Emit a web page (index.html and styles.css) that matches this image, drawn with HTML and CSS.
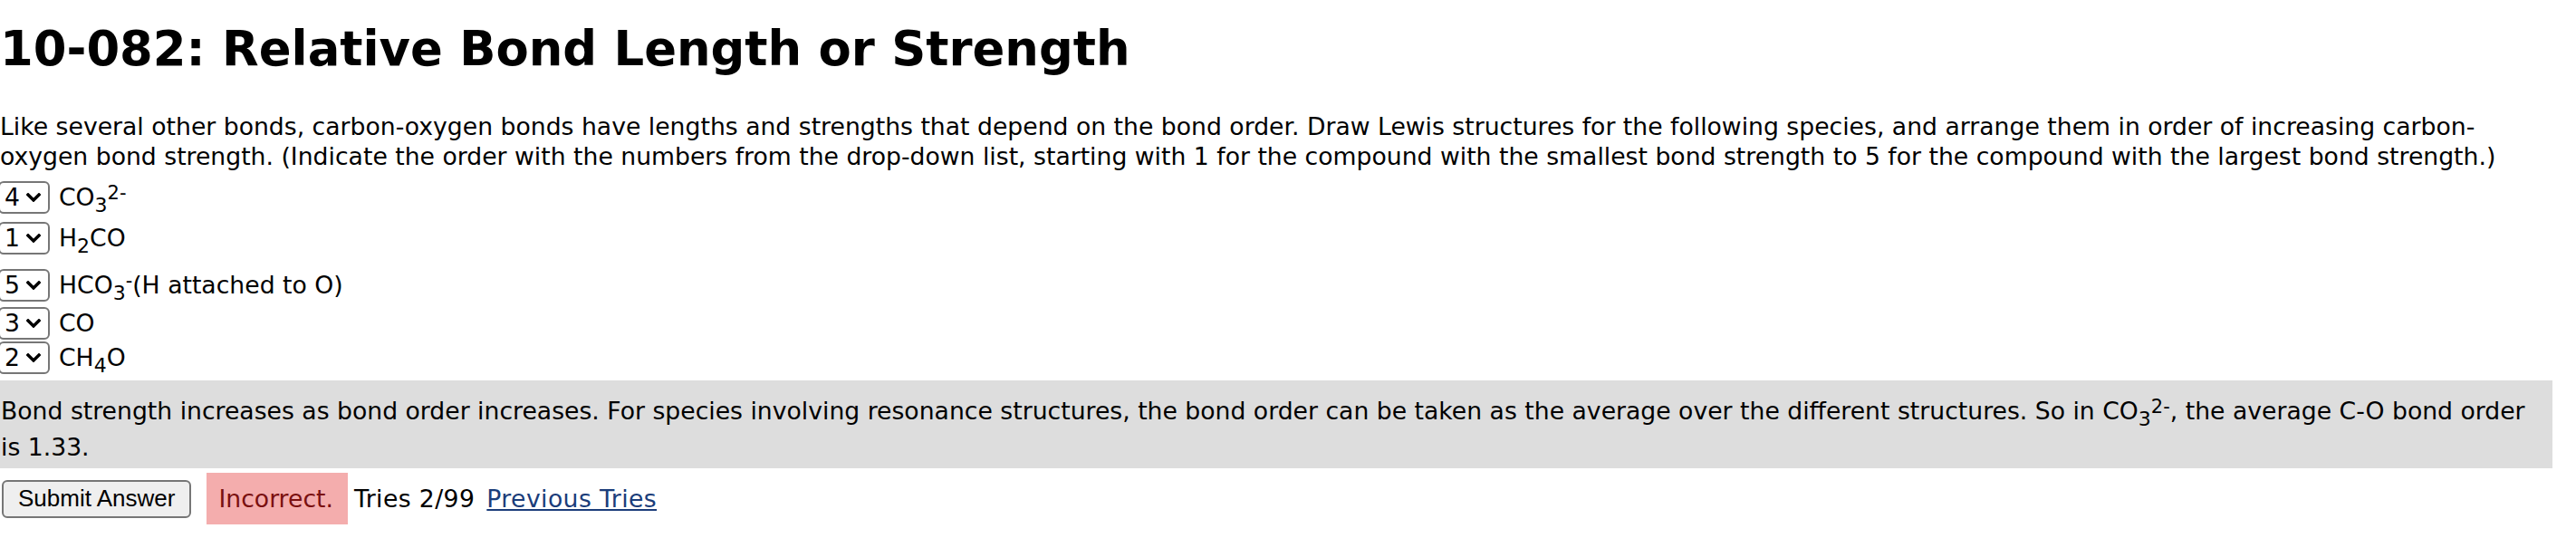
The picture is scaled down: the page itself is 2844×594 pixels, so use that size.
FILE: index.html
```html
<!DOCTYPE html>
<html lang="en">
<head>
<meta charset="utf-8">
<title>10-082: Relative Bond Length or Strength</title>
<link rel="stylesheet" href="styles.css">
</head>
<body>
<div class="page">
  <h1 class="title">10-082: Relative Bond Length or Strength</h1>
  <p class="intro">Like several other bonds, carbon-oxygen bonds have lengths and strengths that depend on the bond order. Draw Lewis structures for the following species, and arrange them in order of increasing carbon-oxygen bond strength. (Indicate the order with the numbers from the drop-down list, starting with 1 for the compound with the smallest bond strength to 5 for the compound with the largest bond strength.)</p>
  <div class="options">
    <div class="opt sup first">
      <span class="dd"><span class="dd-val">4</span><svg class="chev" viewBox="0 0 16 10" width="16" height="10"><polyline points="2,2 8,8 14,2" /></svg></span>
      <span class="label">CO<sub>3</sub><sup>2-</sup></span>
    </div>
    <div class="opt sub">
      <span class="dd"><span class="dd-val">1</span><svg class="chev" viewBox="0 0 16 10" width="16" height="10"><polyline points="2,2 8,8 14,2" /></svg></span>
      <span class="label">H<sub>2</sub>CO</span>
    </div>
    <div class="opt sup sub">
      <span class="dd"><span class="dd-val">5</span><svg class="chev" viewBox="0 0 16 10" width="16" height="10"><polyline points="2,2 8,8 14,2" /></svg></span>
      <span class="label">HCO<sub>3</sub><sup>-</sup>(H attached to O)</span>
    </div>
    <div class="opt">
      <span class="dd"><span class="dd-val">3</span><svg class="chev" viewBox="0 0 16 10" width="16" height="10"><polyline points="2,2 8,8 14,2" /></svg></span>
      <span class="label">CO</span>
    </div>
    <div class="opt sub">
      <span class="dd"><span class="dd-val">2</span><svg class="chev" viewBox="0 0 16 10" width="16" height="10"><polyline points="2,2 8,8 14,2" /></svg></span>
      <span class="label">CH<sub>4</sub>O</span>
    </div>
  </div>
  <div class="hint">Bond strength increases as bond order increases. For species involving resonance structures, the bond order can be taken as the average over the different structures. So in CO<sub>3</sub><sup>2-</sup>, the average C-O bond order is 1.33.</div>
  <div class="actions">
    <button class="submit" type="button">Submit Answer</button>
    <span class="status">Incorrect.</span>
    <span class="tries">Tries 2/99</span>
    <a class="prev" href="#">Previous Tries</a>
  </div>
</div>
</body>
</html>
```
FILE: styles.css
```css
html, body {
  margin: 0;
  padding: 0;
  background: #ffffff;
}

body {
  font-family: Verdana, "DejaVu Sans", sans-serif;
  font-size: 26.67px;
  color: #000000;
}

.page {
  margin-right: 26px;
}

.title {
  margin: 23px 0 0 0;
  font-size: 52.8px;
  line-height: 62px;
  font-weight: bold;
}

.intro {
  margin: 38px 0 0 0;
  line-height: 33px;
}

sub, sup {
  line-height: 0;
}

sub {
  font-size: 22px;
  vertical-align: -7px;
}

sup {
  font-size: 21px;
  vertical-align: 7px;
}

.options {
  display: flex;
  flex-direction: column;
}

.opt {
  display: flex;
  align-items: center;
  gap: 10px;
  padding: 1px 0;
}

.opt.sub {
  padding-bottom: 5px;
}

.opt.sup {
  padding-top: 11px;
}

.opt.first {
  padding-bottom: 8px;
}

.dd {
  display: inline-flex;
  align-items: center;
  box-sizing: border-box;
  height: 36px;
  margin-left: -2px;
  padding: 0 8px 0 5px;
  border: 2px solid #767676;
  border-radius: 6px;
  background: #ffffff;
  line-height: 32px;
}

.dd-val {
  width: 17px;
}

.chev {
  margin-left: 7px;
  fill: none;
  stroke: #000000;
  stroke-width: 3.4;
  stroke-linecap: square;
  stroke-linejoin: miter;
}

.label {
  line-height: 32px;
}

.hint {
  margin-top: 2px;
  padding: 14px 3px 3px 1px;
  background: #dddddd;
  line-height: 40px;
}

.actions {
  display: flex;
  align-items: center;
  margin-top: 5px;
  line-height: 32px;
}

.submit {
  box-sizing: border-box;
  height: 42px;
  margin: 0 17px 0 2px;
  padding: 0 16px;
  font-family: "Liberation Sans", Arial, sans-serif;
  font-size: 26px;
  color: #000000;
  background: #efefef;
  border: 2px solid #767676;
  border-radius: 6px;
}

.status {
  display: flex;
  align-items: center;
  height: 57px;
  padding: 0 16px 0 13px;
  background: #f4adad;
  color: #7a1010;
}

.tries {
  margin-left: 7px;
  letter-spacing: 0.4px;
}

.prev {
  margin-left: 13px;
  color: #1b3d7a;
  text-decoration: underline;
  letter-spacing: 0.4px;
}
```
